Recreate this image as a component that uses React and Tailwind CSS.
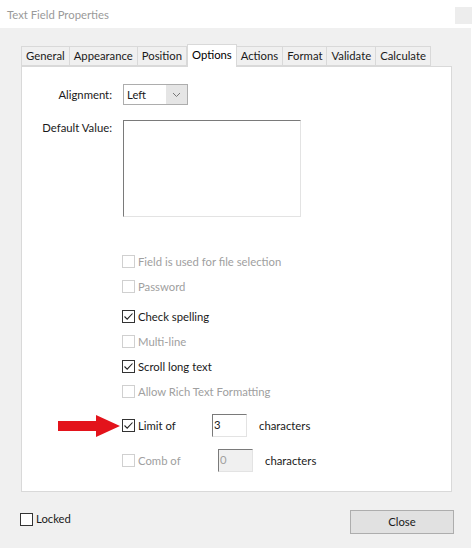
import React from "react";

const font = { fontFamily: 'Lato, "Noto Sans", sans-serif' };

function Box({ checked, disabled }) {
  return (
    <span
      className={
        "flex h-[13px] w-[13px] shrink-0 items-center justify-center border bg-white " +
        (disabled ? "border-[#d0d0d0]" : "border-[#333333]")
      }
    >
      {checked && (
        <svg width="11" height="11" viewBox="0 0 11 11">
          <path d="M1.5 5.5 L4.2 8.2 L9.5 2.5" fill="none" stroke="#222" strokeWidth="1.1" />
        </svg>
      )}
    </span>
  );
}

function Check({ label, checked, disabled, className = "" }) {
  return (
    <div className={"flex items-center gap-[3px] " + className}>
      <Box checked={checked} disabled={disabled} />
      <span className={disabled ? "text-[#a0a0a0]" : "text-[#1a1a1a]"}>{label}</span>
    </div>
  );
}

const tabs = ["General", "Appearance", "Position", "Options", "Actions", "Format", "Validate", "Calculate"];

export default function App() {
  return (
    <div className="h-[552px] w-[474px] overflow-hidden bg-white text-[11.3px] leading-none text-[#1a1a1a]" style={font}>
      <div className="flex h-[28px] items-center justify-between bg-white pl-[7px]">
        <span className="mt-[2px] text-[11.3px] text-[#9a9a9a]">Text Field Properties</span>
        <span className="mr-[2px] mt-[3px] h-[17px] w-[17px] bg-[#ededed]" />
      </div>
      <div className="h-[520px] w-[471px] bg-[#f0f0f0] pl-[21px] pt-[16px]">
        {/* tabs */}
        <div className="flex h-[22px] items-end">
          {tabs.map((t) =>
            t === "Options" ? (
              <div
                key={t}
                className="relative z-10 -mb-px flex h-[23px] items-center border border-b-0 border-[#d9d9d9] bg-white px-[4px] pb-[3px] text-[#000]"
              >
                {t}
              </div>
            ) : (
              <div
                key={t}
                className="-ml-px flex h-[20px] items-center border border-[#d9d9d9] bg-[#f0f0f0] px-[4px] first:ml-0"
              >
                {t}
              </div>
            )
          )}
        </div>
        {/* panel */}
        <div className="h-[426px] w-[431px] border border-[#d9d9d9] bg-white pt-[17px]">
          <div className="flex items-center">
            <div className="w-[90px] text-right">Alignment:</div>
            <div className="ml-[11px] flex h-[21px] w-[65px] border border-[#adadad] bg-white">
              <span className="flex flex-1 items-center pl-[3px]">Left</span>
              <span className="flex w-[21px] items-center justify-center bg-[#e5e5e5]">
                <svg width="9" height="6" viewBox="0 0 9 6">
                  <path d="M1 1 L4.5 4.5 L8 1" fill="none" stroke="#777" strokeWidth="1" />
                </svg>
              </span>
            </div>
          </div>
          <div className="mt-[15px] flex items-start">
            <div className="w-[90px] pt-[2px] text-right">Default Value:</div>
            <div className="ml-[11px] h-[97px] w-[178px] border border-b-[#e3e3e3] border-l-[#7a7a7a] border-r-[#e3e3e3] border-t-[#7a7a7a] bg-white" />
          </div>
          <div className="ml-[100px] mt-[38px] flex flex-col">
            <Check label="Field is used for file selection" disabled className="h-[13px]" />
            <Check label="Password" disabled className="mt-[12px] h-[13px]" />
            <Check label="Check spelling" checked className="mt-[17px] h-[13px]" />
            <Check label="Multi-line" disabled className="mt-[12px] h-[13px]" />
            <Check label="Scroll long text" checked className="mt-[12px] h-[13px]" />
            <Check label="Allow Rich Text Formatting" disabled className="mt-[12px] h-[13px]" />
          </div>
          <div className="ml-[36px] mt-[16px] flex items-center">
            <svg width="62" height="22" viewBox="0 0 62 22" className="mr-[2px]">
              <path d="M0 6 L38 6 L38 0 L62 11 L38 22 L38 16 L0 16 Z" fill="#e3131b" />
            </svg>
            <Box checked />
            <span className="ml-[3px] w-[74px]">Limit of</span>
            <div className="flex h-[23px] w-[35px] items-start border border-b-[#e3e3e3] border-l-[#7a7a7a] border-r-[#e3e3e3] border-t-[#7a7a7a] bg-white pl-[1px] pt-[4px]">
              3
            </div>
            <span className="ml-[12px]">characters</span>
          </div>
          <div className="ml-[100px] mt-[12px] flex items-center">
            <Box disabled />
            <span className="ml-[3px] w-[80px] text-[#a0a0a0]">Comb of</span>
            <div className="flex h-[23px] w-[35px] items-start border border-b-[#e3e3e3] border-l-[#7a7a7a] border-r-[#e3e3e3] border-t-[#7a7a7a] bg-[#f0f0f0] pl-[1px] pt-[4px] text-[#a0a0a0]">
              0
            </div>
            <span className="ml-[12px]">characters</span>
          </div>
        </div>
        {/* bottom */}
        <div className="mt-[18px] flex items-center justify-between pr-[17px]">
          <div className="-ml-[1px] mb-[6px] flex items-center gap-[3px]">
            <span className="h-[13px] w-[13px] border border-[#333333] bg-white" />
            <span>Locked</span>
          </div>
          <button className="flex h-[24px] w-[104px] items-center justify-center border border-[#adadad] bg-[#e1e1e1]">
            Close
          </button>
        </div>
      </div>
    </div>
  );
}
